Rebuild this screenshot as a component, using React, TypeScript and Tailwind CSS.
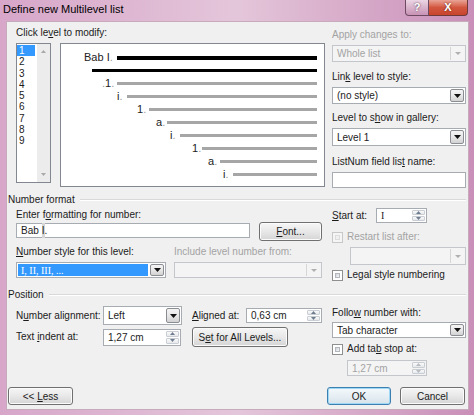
import React from 'react';

const label = 'whitespace-nowrap text-[10px] leading-[12px] text-[#1b1b1b]';
const dim = 'whitespace-nowrap text-[10px] leading-[12px] text-[#a3a3a3]';

function U({ children }: { children: React.ReactNode }) {
  return <span className="underline decoration-1 underline-offset-[1px]">{children}</span>;
}

function Tri({ up, color, w = 7, h = 4 }: { up?: boolean; color: string; w?: number; h?: number }) {
  return (
    <svg width={w} height={h} viewBox={`0 0 ${w} ${h}`}>
      <path d={up ? `M0 ${h}H${w}L${w / 2} 0Z` : `M0 0H${w}L${w / 2} ${h}Z`} fill={color} />
    </svg>
  );
}

type ComboProps = {
  value?: React.ReactNode;
  className: string;
  disabled?: boolean;
  highlight?: boolean;
};

function Combo({ value, className, disabled, highlight }: ComboProps) {
  return (
    <div
      className={`flex items-stretch border p-px ${
        disabled ? 'border-[#c3c6ca] bg-[#f4f4f4]' : 'border-[#a7acb3] bg-white'
      } ${className}`}
    >
      <div
        className={`flex min-w-0 flex-1 items-center pl-[3px] text-[10px] ${
          highlight ? 'bg-[#3399ff] text-white' : disabled ? 'text-[#a3a3a3]' : 'text-[#1b1b1b]'
        }`}
      >
        {value}
      </div>
      {disabled ? (
        <div className="ml-[2px] flex w-[14px] items-center justify-center border-l border-[#d6d6d6]">
          <Tri color="#b0b0b0" w={6} h={3} />
        </div>
      ) : (
        <div className="ml-[2px] flex w-[14px] items-center justify-center rounded-[2px] border border-[#8a8d92] bg-gradient-to-b from-[#f4f4f4] via-[#e8e8e8] to-[#d2d2d2]">
          <Tri color="#111" w={7} h={4} />
        </div>
      )}
    </div>
  );
}

function Spin({ value, className, disabled }: { value: React.ReactNode; className: string; disabled?: boolean }) {
  return (
    <div
      className={`flex items-stretch border p-px ${
        disabled ? 'border-[#c3c6ca] bg-[#f4f4f4] text-[#a3a3a3]' : 'border-[#a7acb3] bg-white text-[#1b1b1b]'
      } ${className}`}
    >
      <div className="flex flex-1 items-center pl-[3px] text-[10px]">{value}</div>
      <div className="flex w-[13px] flex-col gap-px">
        <div className="flex flex-1 items-center justify-center rounded-[1px] border border-[#c9ced4] bg-gradient-to-b from-[#fafafa] to-[#e6e8eb]">
          <Tri up color={disabled ? '#b8bcc2' : '#6f7d90'} w={5} h={3} />
        </div>
        <div className="flex flex-1 items-center justify-center rounded-[1px] border border-[#c9ced4] bg-gradient-to-b from-[#fafafa] to-[#e6e8eb]">
          <Tri color={disabled ? '#b8bcc2' : '#6f7d90'} w={5} h={3} />
        </div>
      </div>
    </div>
  );
}

function Btn({ children, className, primary }: { children: React.ReactNode; className: string; primary?: boolean }) {
  return (
    <div
      className={`flex items-center justify-center whitespace-pre rounded-[3px] border text-[10px] text-[#1b1b1b] ${
        primary
          ? 'border-[#3c7fb1] bg-gradient-to-b from-[#f3f8fb] via-[#e7eff4] to-[#d6e2ea] shadow-[inset_0_0_0_1px_#9fd8f4]'
          : 'border-[#707070] bg-gradient-to-b from-[#f6f6f6] via-[#e8e8e8] to-[#d5d5d5] shadow-[inset_0_0_0_1px_#fbfbfb]'
      } ${className}`}
    >
      {children}
    </div>
  );
}

function Check({ disabled }: { disabled?: boolean }) {
  return (
    <div
      className={`h-[11px] w-[11px] shrink-0 border p-[2px] ${
        disabled ? 'border-[#c8c8c8] bg-[#f5f5f5]' : 'border-[#8e8f8f] bg-white'
      }`}
    >
      <div
        className={`h-full w-full border ${
          disabled
            ? 'border-[#dcdcdc] bg-[#f0f0f0]'
            : 'border-[#b3b7bd] bg-gradient-to-br from-[#cfd3d8] to-[#f7f7f7]'
        }`}
      />
    </div>
  );
}

function Header({ children }: { children: React.ReactNode }) {
  return (
    <div className="flex items-center pl-[1px] pr-[2px]">
      <span className={label}>{children}</span>
      <div className="ml-[5px] h-[2px] flex-1 border-t border-b border-t-[#d9d9d9] border-b-white" />
    </div>
  );
}

const rows = [
  { pl: 'pl-[23px]', w: 'w-[33px]', text: <>Bab I<span className="text-[#9a9a9a]">.</span></>, line: 'h-[4px] bg-black' },
  { pl: 'pl-[31px]', w: 'w-0', text: null, line: 'h-[3px] bg-black' },
  { pl: 'pl-[41px]', w: 'w-[15px]', text: <><span className="text-[#9a9a9a]">.</span>1<span className="text-[#9a9a9a]">.</span></>, line: 'h-[3px] bg-[#a6a6a6]' },
  { pl: 'pl-[56px]', w: 'w-[10px]', text: <>i<span className="text-[#9a9a9a]">.</span></>, line: 'h-[3px] bg-[#a6a6a6]' },
  { pl: 'pl-[76px]', w: 'w-[12px]', text: <>1<span className="text-[#9a9a9a]">.</span></>, line: 'h-[3px] bg-[#a6a6a6]' },
  { pl: 'pl-[95px]', w: 'w-[11px]', text: <>a<span className="text-[#9a9a9a]">.</span></>, line: 'h-[3px] bg-[#a6a6a6]' },
  { pl: 'pl-[109px]', w: 'w-[10px]', text: <>i<span className="text-[#9a9a9a]">.</span></>, line: 'h-[3px] bg-[#a6a6a6]' },
  { pl: 'pl-[131px]', w: 'w-[10px]', text: <>1<span className="text-[#9a9a9a]">.</span></>, line: 'h-[3px] bg-[#a6a6a6]' },
  { pl: 'pl-[147px]', w: 'w-[12px]', text: <>a<span className="text-[#9a9a9a]">.</span></>, line: 'h-[3px] bg-[#a6a6a6]' },
  { pl: 'pl-[162px]', w: 'w-[10px]', text: <>i<span className="text-[#9a9a9a]">.</span></>, line: 'h-[3px] bg-[#a6a6a6]' },
];

function Preview() {
  return (
    <div className="h-[144px] w-[265px] border border-[#828790] bg-white pt-[7px] pr-[7px] text-[11px] leading-[13px] text-[#222]">
      {rows.map((r, i) => (
        <div key={i} className={`flex h-[13px] items-center ${r.pl}`}>
          <span className={`${r.w} shrink-0 whitespace-nowrap`}>{r.text}</span>
          <div className={`flex-1 ${r.line}`} />
        </div>
      ))}
    </div>
  );
}

function LevelList() {
  return (
    <div className="flex h-[140px] w-[35px] border border-[#828790] bg-white">
      <div className="w-[20px] pt-px">
        {[1, 2, 3, 4, 5, 6, 7, 8, 9].map((n) => (
          <div
            key={n}
            className={`h-[11.25px] pl-[2px] text-[10px] leading-[11.25px] ${
              n === 1 ? 'w-[18px] bg-[#3399ff] text-white' : 'text-[#1b1b1b]'
            }`}
          >
            {n}
          </div>
        ))}
      </div>
      <div className="flex flex-1 flex-col items-center justify-between bg-[#ececec] py-[6px]">
        <Tri up color="#a9a9a9" w={5} h={3} />
        <Tri color="#a9a9a9" w={5} h={3} />
      </div>
    </div>
  );
}

export default function App() {
  return (
    <div className="flex h-[415px] w-[474px] flex-col bg-gradient-to-r from-[#d7a6c9] via-[#e4c6da] to-[#c98fb8] font-['Liberation_Sans',Arial,sans-serif]">
      <div className="flex h-[21px] shrink-0 items-start justify-between">
        <div className="pl-[3px] pt-[3px] text-[11px] leading-[13px] text-black">Define new Multilevel list</div>
        <div className="mr-[6px] flex">
          <div className="flex h-[16px] w-[24px] items-center justify-center rounded-bl-[4px] border border-t-0 border-[#6e4a62] bg-gradient-to-b from-[#ecd6e4] via-[#d9b3cb] to-[#c892b6] text-[11px] font-bold text-white [text-shadow:0_0_2px_#4a2a40]">
            ?
          </div>
          <div className="flex h-[16px] w-[39px] items-center justify-center rounded-br-[4px] border border-l-0 border-t-0 border-[#6e3a3a] bg-gradient-to-b from-[#e9a396] via-[#d2563f] to-[#c8442d] text-[11px] font-bold text-white [text-shadow:0_0_2px_#5a1a10]">
            X
          </div>
        </div>
      </div>

      <div className="mb-[5px] ml-[6px] mr-[5px] flex flex-1 flex-col border border-[#c8aabd] bg-[#f0f0f0]">
        {/* top: levels, preview, link settings */}
        <div className="flex pl-[9px] pr-[2px] pt-[5px]">
          <div className="flex flex-col">
            <div className={label}>
              Click le<U>v</U>el to modify:
            </div>
            <div className="mt-[4px] flex gap-[9px]">
              <LevelList />
              <Preview />
            </div>
          </div>
          <div className="ml-[7px] flex w-[134px] flex-col pt-[2px]">
            <div className={dim}>Apply changes to:</div>
            <Combo className="mt-[4px] h-[17px]" value="Whole list" disabled />
            <div className={`${label} mt-[9px]`}>
              Lin<U>k</U> level to style:
            </div>
            <Combo className="mt-[4px] h-[17px]" value="(no style)" />
            <div className={`${label} mt-[8px]`}>
              Level to s<U>h</U>ow in gallery:
            </div>
            <Combo className="mt-[4px] h-[18px]" value="Level 1" />
            <div className={`${label} mt-[10px]`}>
              ListNum field lis<U>t</U> name:
            </div>
            <div className="mt-[4px] h-[16px] border border-[#a7acb3] bg-white" />
          </div>
        </div>

        <div className="mt-[6px]">
          <Header>Number format</Header>
        </div>

        <div className="grid grid-cols-[306px_134px] gap-x-[10px] pl-[9px]">
          <div className="flex flex-col pt-[3px]">
            <div className={label}>
              Enter f<U>o</U>rmatting for number:
            </div>
            <div className="mt-[1px] flex items-start">
              <div className="mt-px flex h-[15px] w-[234px] items-center border border-[#a7acb3] bg-white pl-[4px] text-[10px] text-[#1b1b1b]">
                Bab <span className="ml-[3px] bg-[#d6d6d6]">I</span>.
              </div>
              <Btn className="ml-[9px] h-[19px] w-[63px]">
                <U>F</U>ont...
              </Btn>
            </div>
            <div className={`${label} mt-[5px] flex justify-between`}>
              <span className="w-[158px]">
                <U>N</U>umber style for this level:
              </span>
              <span className="flex-1 text-[#a3a3a3]">Include level number from:</span>
            </div>
            <div className="mt-[4px] flex">
              <Combo
                className="h-[16px] w-[150px]"
                highlight
                value={<span className="font-['Liberation_Serif',serif] text-[10px]">I, II, III, ...</span>}
              />
              <Combo className="ml-[8px] h-[16px] w-[148px]" disabled />
            </div>
          </div>
          <div className="flex flex-col pt-[2px]">
            <div className="flex items-center">
              <span className={`${label} w-[44px]`}>
                <U>S</U>tart at:
              </span>
              <Spin className="h-[15px] w-[51px]" value={<span className="font-['Liberation_Serif',serif]">I</span>} />
            </div>
            <div className="mt-[8px] flex h-[12px] items-center gap-[4px]">
              <Check disabled />
              <span className={dim}>Restart list after:</span>
            </div>
            <Combo className="ml-[18px] mt-[4px] h-[18px]" disabled />
            <div className="mt-[4px] flex h-[12px] items-center gap-[4px]">
              <Check />
              <span className={label}>Legal style numbering</span>
            </div>
          </div>
        </div>

        <div className="mt-[8px]">
          <Header>Position</Header>
        </div>

        <div className="grid grid-cols-[306px_134px] gap-x-[10px] pl-[9px]">
          <div className="flex flex-col pt-[5px]">
            <div className="flex h-[19px] items-center">
              <span className={`${label} w-[87px]`}>
                N<U>u</U>mber alignment:
              </span>
              <Combo className="h-[19px] w-[79px]" value="Left" />
              <span className={`${label} ml-[10px] w-[54px]`}>
                <U>A</U>ligned at:
              </span>
              <Spin className="h-[15px] w-[76px]" value="0,63 cm" />
            </div>
            <div className="mt-[2px] flex h-[20px] items-center">
              <span className={`${label} w-[87px]`}>
                Text <U>i</U>ndent at:
              </span>
              <Spin className="h-[17px] w-[78px]" value="1,27 cm" />
              <Btn className="ml-[11px] h-[20px] w-[96px]">
                S<U>e</U>t for All Levels...
              </Btn>
            </div>
          </div>
          <div className="flex flex-col pt-[6px]">
            <div className={label}>
              Follo<U>w</U> number with:
            </div>
            <Combo className="mt-[3px] h-[16px]" value="Tab character" />
            <div className="mt-[5px] flex h-[12px] items-center gap-[4px]">
              <Check />
              <span className={label}>
                Add ta<U>b</U> stop at:
              </span>
            </div>
            <Spin className="ml-[15px] mt-[5px] h-[16px] w-[80px]" value="1,27 cm" disabled />
          </div>
        </div>

        <div className="mt-[11px] flex pl-[1px] pr-[3px]">
          <Btn className="h-[18px] w-[65px]">
            {'<< '}
            <U>L</U>ess
          </Btn>
          <div className="flex-1" />
          <Btn className="h-[18px] w-[64px]" primary>
            OK
          </Btn>
          <Btn className="ml-[9px] h-[18px] w-[65px]">Cancel</Btn>
        </div>
      </div>
    </div>
  );
}
